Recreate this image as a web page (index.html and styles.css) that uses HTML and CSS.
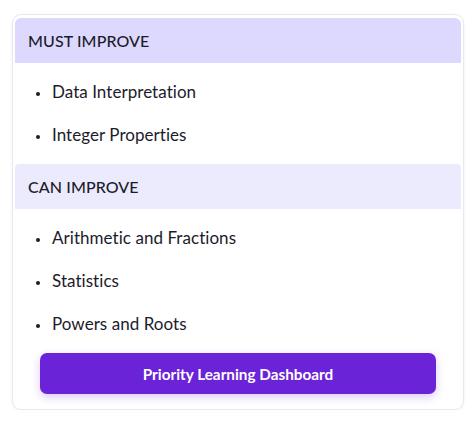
FILE: index.html
```html
<!doctype html>
<html lang="en">
<head>
  <meta charset="UTF-8">
  <title>Improvement Areas</title>
  <link rel="stylesheet" href="styles.css">
</head>
<body>
  <div class="card">
    <div class="group-title must">MUST IMPROVE</div>
    <ul class="topics">
      <li>Data Interpretation</li>
      <li>Integer Properties</li>
    </ul>
    <div class="group-title can">CAN IMPROVE</div>
    <ul class="topics">
      <li>Arithmetic and Fractions</li>
      <li>Statistics</li>
      <li>Powers and Roots</li>
    </ul>
    <div class="actions">
      <button class="dash-btn">Priority Learning Dashboard</button>
    </div>
  </div>
</body>
</html>
```

FILE: styles.css
```css
*{margin:0;
  padding:0;
  box-sizing:border-box;}
body{background:#fff;
     font-family:Lato, "Liberation Sans", sans-serif;
     color:#1c1b2b;}
.card{width:452px;
      margin:14px 0 0 12px;
      padding:3px 2px 15px 2px;
      border:1px solid #e9e8ee;
      border-radius:9px;
      box-shadow:0 1px 3px rgba(0,0,0,0.06);}
.group-title{height:45px;
             padding-left:13px;
             display:flex;
             align-items:center;
             font-size:16px;
             font-weight:500;
             letter-spacing:0.1px;
             border-radius:6px 6px 0 0;}
.group-title.must{background:#ddd8fd;}
.group-title.can{background:#ecebfd;
                 border-radius:4px 4px 0 0;}
.topics{padding:8px 0 7px 36px;
        list-style:disc;}
.topics li{height:43px;
           line-height:42px;
           font-size:17px;
           letter-spacing:0.05px;
           padding-left:1px;}
.topics li::marker{font-size:13px;}
.actions{padding:0 25px;}
.dash-btn{width:100%;
          height:41px;
          border:none;
          border-radius:7px;
          background:#6b23d7;
          color:#fff;
          font-family:Lato, "Liberation Sans", sans-serif;
          font-size:15.3px;
          font-weight:700;
          box-shadow:0 3px 8px rgba(107,35,215,0.25);
          cursor:pointer;}
```
